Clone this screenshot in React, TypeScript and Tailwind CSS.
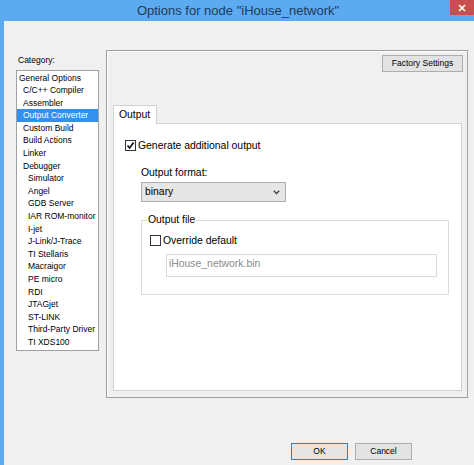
import React from "react";

const items: { label: string; level: number; selected?: boolean }[] = [
  { label: "General Options", level: 0 },
  { label: "C/C++ Compiler", level: 1 },
  { label: "Assembler", level: 1 },
  { label: "Output Converter", level: 1, selected: true },
  { label: "Custom Build", level: 1 },
  { label: "Build Actions", level: 1 },
  { label: "Linker", level: 1 },
  { label: "Debugger", level: 1 },
  { label: "Simulator", level: 2 },
  { label: "Angel", level: 2 },
  { label: "GDB Server", level: 2 },
  { label: "IAR ROM-monitor", level: 2 },
  { label: "I-jet", level: 2 },
  { label: "J-Link/J-Trace", level: 2 },
  { label: "TI Stellaris", level: 2 },
  { label: "Macraigor", level: 2 },
  { label: "PE micro", level: 2 },
  { label: "RDI", level: 2 },
  { label: "JTAGjet", level: 2 },
  { label: "ST-LINK", level: 2 },
  { label: "Third-Party Driver", level: 2 },
  { label: "TI XDS100", level: 2 },
];

function Check({ checked }: { checked?: boolean }) {
  return (
    <div className="w-[11px] h-[11px] border border-[#333333] bg-white flex items-center justify-center shrink-0">
      {checked && (
        <svg width="9" height="9" viewBox="0 0 9 9">
          <polyline points="1.5,4.5 3.6,7 7.6,1.6" fill="none" stroke="#111" strokeWidth="1.7" />
        </svg>
      )}
    </div>
  );
}

export default function App() {
  return (
    <div className="w-[474px] h-[465px] bg-[#f0f0f0] flex flex-col overflow-hidden font-['Liberation_Sans',Arial,sans-serif] text-black">
      {/* Title bar */}
      <div className="h-[21px] bg-[#5cabf0] relative flex items-center justify-center shrink-0">
        <span className="text-[13px] leading-[13px] text-[#1e3a5c] ml-[2px]">Options for node "iHouse_network"</span>
        <div className="absolute right-0 top-0 w-[24px] h-[15px] bg-[#c94f4f] flex items-center justify-center">
          <svg width="8" height="8" viewBox="0 0 8 8">
            <path d="M1 1 L7 7 M7 1 L1 7" stroke="#fff" strokeWidth="1.6" />
          </svg>
        </div>
      </div>

      {/* Body */}
      <div className="flex-1 flex flex-col border-l-4 border-[#5cabf0]">
        <div className="flex pl-[12px] pt-[29px]">
          {/* Left column */}
          <div className="w-[83px] flex flex-col shrink-0">
            <div className="text-[8.5px] leading-[10px] mt-[5px] ml-[2px]">Category:</div>
            <div className="mt-[5px] h-[281px] border border-[#a0a0a0] bg-white pt-[0.5px] flex flex-col">
              {items.map((it) => (
                <div
                  key={it.label}
                  className={
                    "h-[12.6px] leading-[12.6px] text-[8.5px] whitespace-nowrap " +
                    (it.selected ? "bg-[#3390ec] text-white " : "") +
                    (it.level === 0 ? "pl-[2px]" : it.level === 1 ? "pl-[6px]" : "pl-[11px]")
                  }
                >
                  {it.label}
                </div>
              ))}
            </div>
          </div>

          {/* Right frame */}
          <div className="ml-[7px] w-[362px] h-[348px] border border-[#a0a0a0] shadow-[inset_1px_1px_0_#ffffff] flex flex-col">
            <div className="self-end mr-[4px] mt-[4px] w-[81px] h-[17px] border border-[#adadad] bg-[#e3e3e3] flex items-center justify-center text-[8.5px]">
              Factory Settings
            </div>
            <div className="ml-[6px] mt-[33px] w-[44px] h-[19px] -mb-px relative z-10 bg-white border border-b-0 border-[#d0d0d0] flex items-start pt-[3px] pl-[5px] text-[10.4px] leading-[12px]">
              Output
            </div>
            <div className="ml-[6px] w-[349px] h-[268px] border border-[#d0d0d0] bg-white flex flex-col">
              <div className="mt-[16px] ml-[11px] flex items-center gap-[2px]">
                <Check checked />
                <span className="text-[10.4px] leading-[11px]">Generate additional output</span>
              </div>
              <div className="mt-[16px] ml-[27px] text-[10.4px] leading-[12px]">Output format:</div>
              <div className="mt-[3px] ml-[27px] w-[145px] h-[20px] border border-[#acacac] bg-[#e6e6e6] flex items-center justify-between pl-[3px] pr-[5px]">
                <span className="text-[10.4px] leading-[12px]">binary</span>
                <svg width="7" height="5" viewBox="0 0 7 5">
                  <polyline points="0.8,0.8 3.5,3.6 6.2,0.8" fill="none" stroke="#333" strokeWidth="1.3" />
                </svg>
              </div>
              <div className="mt-[18px] ml-[27px] w-[308px] h-[75px] border border-[#dcdcdc] relative flex flex-col">
                <span className="absolute left-[5px] -top-[7px] bg-white px-[1px] text-[10.4px] leading-[12px]">Output file</span>
                <div className="mt-[14px] ml-[8px] flex items-center gap-[2px]">
                  <Check />
                  <span className="text-[10.4px] leading-[11px]">Override default</span>
                </div>
                <div className="mt-[8px] ml-[24px] w-[271px] h-[23px] border border-[#d9d9d9] bg-white flex items-center pl-[2px] pb-[3px]">
                  <span className="text-[10.4px] leading-[12px] text-[#8c8c8c]">iHouse_network.bin</span>
                </div>
              </div>
            </div>
          </div>
        </div>

        {/* Buttons */}
        <div className="flex justify-end gap-[7px] mt-[45px] pr-[62px]">
          <div className="w-[57px] h-[17px] border border-[#3c7fb1] bg-[#e5e5e5] flex items-center justify-center text-[8.5px]">
            OK
          </div>
          <div className="w-[57px] h-[17px] border border-[#adadad] bg-[#e3e3e3] flex items-center justify-center text-[8.5px]">
            Cancel
          </div>
        </div>
      </div>
    </div>
  );
}
